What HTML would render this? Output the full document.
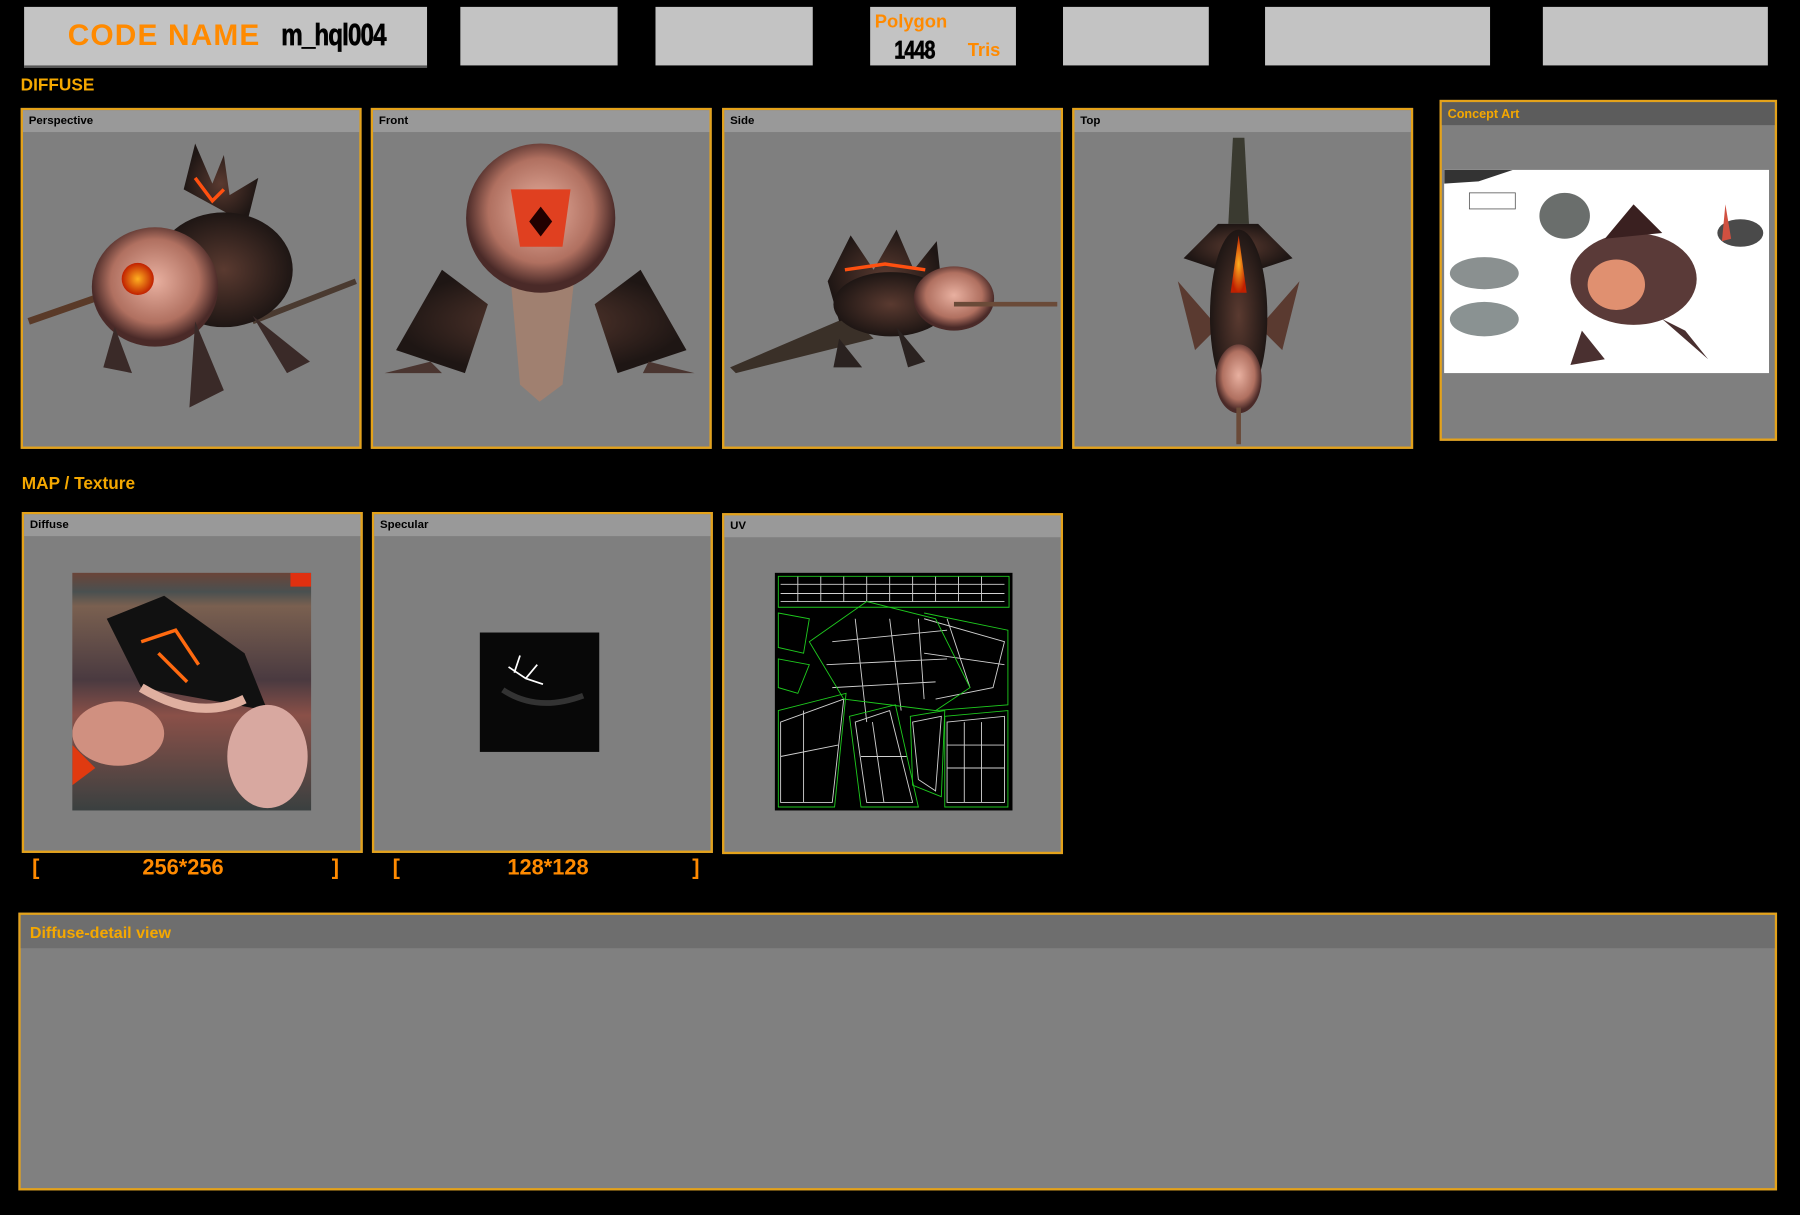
<!DOCTYPE html>
<html><head><meta charset="utf-8"><style>
html,body{margin:0;padding:0;background:#000;width:1800px;height:1215px;overflow:hidden}
#c{position:absolute;left:0;top:0;width:1568px;height:1058px;transform:scale(1.147959);transform-origin:0 0;font-family:"Liberation Sans",Arial,sans-serif}
.a{position:absolute}
.tb{position:absolute;background:#c3c3c3;top:6px;height:51px}
.p{position:absolute;border:2px solid #e4a21a;background:#7f7f7f;box-sizing:border-box}
.p .h{height:19px;background:#999;font-size:10px;font-weight:bold;color:#000;padding:4px 0 0 5px;box-sizing:border-box}
.lbl{position:absolute;color:#f5a800;font-weight:bold;font-size:15px}
.o{color:#ff8a00;font-weight:bold;font-size:19px}
.n{font-weight:bold;transform:scaleX(0.78);transform-origin:0 0;-webkit-text-stroke:0.6px #000}
</style></head><body><div id="c">
<div class="tb" style="left:21px;width:351px;border-bottom:2px solid #555"><span class="a" style="left:38px;top:9px;font-size:26px;font-weight:bold;color:#ff8a00;letter-spacing:1px">CODE NAME</span><span class="a n" style="left:224px;top:9px;font-size:27px;color:#000;letter-spacing:-1px">m_hql004</span></div>
<div class="tb" style="left:401px;width:137px"></div>
<div class="tb" style="left:571px;width:137px"></div>
<div class="tb" style="left:758px;width:127px"><span class="a" style="left:4px;top:5px;font-size:16px;font-weight:bold;color:#ff8a00">Polygon</span><span class="a n" style="left:21px;top:25px;font-size:22px;color:#000;letter-spacing:-1px">1448</span><span class="a" style="left:85px;top:30px;font-size:16px;font-weight:bold;color:#ff8a00">Tris</span></div>
<div class="tb" style="left:926px;width:127px"></div>
<div class="tb" style="left:1102px;width:196px"></div>
<div class="tb" style="left:1344px;width:196px"></div>

<div class="lbl" style="left:18px;top:66px">DIFFUSE</div>

<svg width="0" height="0" style="position:absolute"><defs>
<radialGradient id="flesh" cx="50%" cy="45%"><stop offset="0" stop-color="#e8b0a0"/><stop offset="0.7" stop-color="#b07060"/><stop offset="1" stop-color="#4a2a28"/></radialGradient>
<radialGradient id="dark" cx="50%" cy="50%"><stop offset="0" stop-color="#5a3a30"/><stop offset="1" stop-color="#1e1614"/></radialGradient>
<radialGradient id="fire"><stop offset="0" stop-color="#ffb020"/><stop offset="1" stop-color="#c02000"/></radialGradient>
</defs></svg>

<div class="p" style="left:18px;top:94px;width:297px;height:297px"><div class="h">Perspective</div>
<svg class="a" style="left:0;top:19px" width="293" height="274"><line x1="5" y1="165" x2="120" y2="125" stroke="#5a3a28" stroke-width="6"/><line x1="200" y1="165" x2="290" y2="130" stroke="#4a3a30" stroke-width="5"/><path d="M140 50 L150 10 L165 45 L175 20 L180 55 L205 40 L195 80 Z" fill="url(#dark)"/><path d="M150 40 L165 60 L175 50" stroke="#ff5010" stroke-width="3" fill="none"/><ellipse cx="175" cy="120" rx="60" ry="50" fill="url(#dark)"/><ellipse cx="115" cy="135" rx="55" ry="52" fill="url(#flesh)"/><circle cx="100" cy="128" r="14" fill="url(#fire)"/><path d="M80 170 L70 205 L95 210 Z M150 165 L145 240 L175 225 Z M200 160 L230 210 L250 200 Z" fill="#3a2a28"/></svg></div>

<div class="p" style="left:323px;top:94px;width:297px;height:297px"><div class="h">Front</div>
<svg class="a" style="left:0;top:19px" width="293" height="274"><path d="M20 190 L60 120 L100 150 L80 210 Z M273 190 L233 120 L193 150 L213 210 Z" fill="url(#dark)"/><path d="M120 130 L175 130 L165 220 L145 235 L128 220 Z" fill="#a08070"/><ellipse cx="146" cy="75" rx="65" ry="65" fill="url(#flesh)"/><path d="M120 50 L172 50 L165 100 L128 100 Z" fill="#e04020"/><path d="M146 65 L156 78 L146 91 L136 78 Z" fill="#200"/><path d="M10 210 L50 200 L60 210 Z M240 200 L280 210 L235 210 Z" fill="#4a3530"/></svg></div>

<div class="p" style="left:629px;top:94px;width:297px;height:297px"><div class="h">Side</div>
<svg class="a" style="left:0;top:19px" width="293" height="274"><path d="M5 205 L110 160 L130 180 L10 210 Z" fill="#3a3028"/><path d="M90 130 L110 90 L130 120 L150 85 L165 120 L185 95 L190 140 L100 165 Z" fill="url(#dark)"/><path d="M105 120 L140 115 L175 120" stroke="#ff5010" stroke-width="3" fill="none"/><ellipse cx="145" cy="150" rx="50" ry="28" fill="url(#dark)"/><ellipse cx="200" cy="145" rx="35" ry="28" fill="url(#flesh)"/><line x1="200" y1="150" x2="290" y2="150" stroke="#6a4a38" stroke-width="4"/><path d="M100 180 L95 205 L120 205 Z M150 170 L160 205 L175 200 Z" fill="#2a2220"/></svg></div>

<div class="p" style="left:934px;top:94px;width:297px;height:297px"><div class="h">Top</div>
<svg class="a" style="left:0;top:19px" width="293" height="274"><path d="M138 5 L148 5 L152 80 L134 80 Z" fill="#3a3a30"/><path d="M95 110 L125 80 L160 80 L190 110 L160 120 L125 120 Z" fill="url(#dark)"/><path d="M90 130 L105 190 L125 170 Z M196 130 L181 190 L161 170 Z" fill="#5a3a30"/><ellipse cx="143" cy="160" rx="25" ry="75" fill="url(#dark)"/><path d="M143 90 L136 140 L150 140 Z" fill="url(#fire)"/><ellipse cx="143" cy="215" rx="20" ry="30" fill="url(#flesh)"/><line x1="143" y1="240" x2="143" y2="272" stroke="#6a4a38" stroke-width="4"/></svg></div>

<div class="p" style="left:1254px;top:87px;width:294px;height:297px"><div style="height:20px;background:#5c5c5c;color:#f5a800;font-size:11px;font-weight:bold;padding:5px 0 0 5px;box-sizing:border-box">Concept Art</div>
<div class="a" style="left:2px;top:59px;width:283px;height:177px;background:#fff;overflow:hidden"><svg width="283" height="177"><path d="M0 0 L60 0 L30 10 L0 12 Z" fill="#333"/><rect x="22" y="20" width="40" height="14" fill="none" stroke="#555" stroke-width="0.7"/><ellipse cx="105" cy="40" rx="22" ry="20" fill="#6a6e6c"/><ellipse cx="35" cy="90" rx="30" ry="14" fill="#8a9090"/><ellipse cx="35" cy="130" rx="30" ry="15" fill="#8a9292"/><ellipse cx="165" cy="95" rx="55" ry="40" fill="#5a3a38"/><ellipse cx="150" cy="100" rx="25" ry="22" fill="#e09070"/><path d="M140 60 L165 30 L190 55 Z" fill="#3a2020"/><ellipse cx="258" cy="55" rx="20" ry="12" fill="#4a4a4a"/><path d="M245 30 L250 60 L242 62 Z" fill="#d05040"/><path d="M120 140 L110 170 L140 165 Z M190 130 L230 165 L210 140 Z" fill="#4a3030"/></svg></div></div>

<div class="lbl" style="left:19px;top:413px">MAP / Texture</div>

<div class="p" style="left:19px;top:446px;width:297px;height:297px"><div class="h">Diffuse</div>
<div class="a" style="left:42px;top:51px;width:208px;height:207px;background:linear-gradient(180deg,#6a4438 0,#4a5050 8%,#7a6050 14%,#4a3a40 45%,#8a5048 60%,#3a4040 100%);overflow:hidden"><svg width="208" height="207"><path d="M30 40 L80 20 L150 70 L170 120 L60 100 Z" fill="#111"/><path d="M60 60 L90 50 L110 80 M75 70 L100 95" stroke="#ff6a10" stroke-width="3" fill="none"/><ellipse cx="40" cy="140" rx="40" ry="28" fill="#d09080"/><ellipse cx="170" cy="160" rx="35" ry="45" fill="#d8a8a0"/><path d="M60 100 Q110 130 150 110" stroke="#e0b0a0" stroke-width="8" fill="none"/><rect x="190" y="0" width="18" height="12" fill="#e03010"/><path d="M0 150 L20 170 L0 185 Z" fill="#e03a10"/></svg></div></div>

<div class="p" style="left:324px;top:446px;width:297px;height:297px"><div class="h">Specular</div>
<div class="a" style="left:92px;top:103px;width:104px;height:104px;background:#080808"><svg width="104" height="104"><path d="M25 30 L40 40 L55 45 M30 35 L35 20 M40 40 L50 28" stroke="#fff" stroke-width="1.5" fill="none"/><path d="M20 50 Q50 70 90 55" stroke="#333" stroke-width="5" fill="none"/></svg></div></div>

<div class="p" style="left:629px;top:447px;width:297px;height:297px"><div class="h">UV</div>
<div class="a" style="left:44px;top:50px;width:207px;height:207px;background:#000;overflow:hidden"><svg width="207" height="207" fill="none" stroke-width="0.8">
<g stroke="#d0d0d0"><path d="M5 10 L200 10 M5 18 L200 18 M5 25 L200 25"/><path d="M20 3 L20 25 M40 3 L40 25 M60 3 L60 25 M80 3 L80 25 M100 3 L100 25 M120 3 L120 25 M140 3 L140 25 M160 3 L160 25 M180 3 L180 25"/><path d="M50 60 L150 50 M45 80 L150 75 M50 100 L140 95 M70 40 L80 130 M100 40 L110 120 M125 40 L130 110"/><path d="M130 40 L200 60 L190 100 L140 110 M150 40 L170 100 M130 70 L200 80"/><path d="M150 130 L200 125 L200 200 L150 200 Z M150 150 L200 150 M150 170 L200 170 M165 130 L165 200 M180 130 L180 200"/><path d="M70 130 L100 120 L120 200 L80 200 Z M85 130 L95 200 M75 160 L115 160"/><path d="M5 130 L60 110 L50 200 L5 200 Z M5 160 L55 150 M25 120 L25 200"/><path d="M120 130 L145 125 L140 190 L125 180 Z"/></g>
<g stroke="#1ec81e"><path d="M3 3 L204 3 L204 30 L3 30 Z"/><path d="M30 60 L80 25 L140 40 L170 100 L140 120 L60 110 Z"/><path d="M130 35 L203 50 L203 115 L140 120"/><path d="M148 125 L203 120 L203 204 L148 204 Z"/><path d="M65 125 L105 115 L125 204 L75 204 Z"/><path d="M3 120 L62 105 L52 204 L3 204 Z"/><path d="M3 35 L30 40 L25 70 L3 65 Z"/><path d="M3 75 L30 80 L20 105 L3 100 Z"/><path d="M118 125 L148 120 L145 195 L120 185 Z"/></g></svg></div></div>

<div class="a o" style="left:28px;top:746px">[</div>
<div class="a o" style="left:124px;top:746px">256*256</div>
<div class="a o" style="left:289px;top:746px">]</div>
<div class="a o" style="left:342px;top:746px">[</div>
<div class="a o" style="left:442px;top:746px">128*128</div>
<div class="a o" style="left:603px;top:746px">]</div>

<div class="p" style="left:16px;top:795px;width:1532px;height:242px;background:#808080"><div style="height:29px;background:#6e6e6e;color:#f5a800;font-size:14px;font-weight:bold;padding:7px 0 0 8px;box-sizing:border-box">Diffuse-detail view</div></div>
</div></body></html>
